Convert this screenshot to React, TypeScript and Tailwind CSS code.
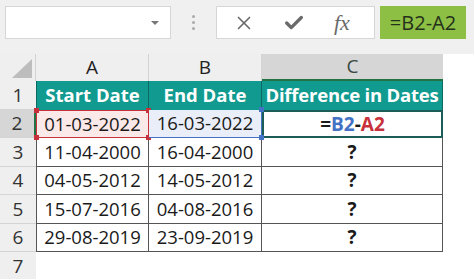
import { Check, X } from "lucide-react";

const rows = [
    ["11-04-2000", "16-04-2000"],
    ["04-05-2012", "14-05-2012"],
    ["15-07-2016", "04-08-2016"],
    ["29-08-2019", "23-09-2019"],
];

const font = { fontFamily: '"Open Sans", "Liberation Sans", sans-serif' };

const Handle = ({ pos, color }: { pos: string; color: string }) => (
    <span className={`absolute w-[5px] h-[5px] ${pos} ${color}`} />
);

const RowHead = ({ n, active }: { n: number; active?: boolean }) => (
    <div
        className={`w-[36px] shrink-0 flex items-center justify-center text-[19px] text-[#333] border-b border-[#d4d4d4] ${
            active ? "bg-[#d6d6d6] border-r-2 border-r-[#217346]" : "bg-[#efefef]"
        }`}
    >
        {n}
    </div>
);

const App = () => {
    return (
        <div className="w-[474px] h-[279px] overflow-hidden bg-white" style={font}>
            {/* formula bar */}
            <div className="h-[54px] bg-[#f0f0f0] flex items-start pt-[6px] pl-[5px]">
                <div className="w-[166px] h-[33px] bg-white border border-[#d6d6d6] flex items-center justify-end pr-[11px]">
                    <span className="w-0 h-0 border-l-[4px] border-r-[4px] border-t-[4px] border-l-transparent border-r-transparent border-t-[#777]" />
                </div>
                <div className="w-[45px] h-[33px] flex flex-col items-center justify-center gap-[3px]">
                    <span className="w-[3px] h-[3px] rounded-full bg-[#aaa]" />
                    <span className="w-[3px] h-[3px] rounded-full bg-[#aaa]" />
                    <span className="w-[3px] h-[3px] rounded-full bg-[#aaa]" />
                </div>
                <div className="w-[159px] h-[33px] bg-white border border-[#d6d6d6] flex items-center pl-[16px]">
                    <X size={22} strokeWidth={1.8} className="text-[#6a6a6a]" />
                    <Check size={22} strokeWidth={3.6} className="text-[#6a6a6a] ml-[28px]" />
                    <span
                        className="ml-[29px] text-[22px] italic text-[#6a6a6a] leading-none"
                        style={{ fontFamily: '"Liberation Serif", serif' }}
                    >
                        fx
                    </span>
                </div>
                <div className="ml-[5px] w-[86px] h-[33px] bg-[#8dbf45] flex items-center justify-center text-[20px] text-[#24301a]">
                    =B2-A2
                </div>
            </div>

            {/* column headers */}
            <div className="flex h-[27px]">
                <div className="w-[36px] shrink-0 bg-[#efefef] border-r border-[#d4d4d4] relative">
                    <span className="absolute right-[3px] bottom-[3px] w-0 h-0 border-b-[19px] border-l-[20px] border-b-[#bdbdbd] border-l-transparent" />
                </div>
                <div className="w-[113px] bg-[#efefef] border-r border-[#d4d4d4] flex items-center justify-center text-[19px] text-[#222]">A</div>
                <div className="w-[113px] bg-[#efefef] border-r border-[#d4d4d4] flex items-center justify-center text-[19px] text-[#222]">B</div>
                <div className="w-[181px] bg-[#d6d6d6] border-b-2 border-[#217346] flex items-center justify-center text-[19px] text-[#3a4a44]">C</div>
                <div className="flex-1 bg-white" />
            </div>

            {/* row 1 */}
            <div className="flex h-[28.5px]">
                <RowHead n={1} />
                <div className="w-[113px] bg-[#119a8f] border-l border-r border-[#0b6a63] flex items-center justify-center text-[18.5px] font-bold text-white">Start Date</div>
                <div className="w-[113px] bg-[#119a8f] border-r border-[#0b6a63] flex items-center justify-center text-[18.5px] font-bold text-white">End Date</div>
                <div className="w-[181px] bg-[#119a8f] border-r border-[#0b6a63] flex items-center justify-center text-[18.5px] font-bold text-white tracking-[-0.2px]">Difference in Dates</div>
            </div>

            {/* row 2 */}
            <div className="flex h-[28.5px]">
                <RowHead n={2} active />
                <div className="relative w-[113px] bg-[#fbe8e8] border border-[#c7313b] flex items-center justify-center text-[18.5px] text-[#1a1a1a]">
                    01-03-2022
                    <Handle pos="-left-[3px] -top-[3px]" color="bg-[#c7313b]" />
                    <Handle pos="-right-[3px] -top-[3px]" color="bg-[#c7313b]" />
                    <Handle pos="-left-[3px] -bottom-[3px]" color="bg-[#c7313b]" />
                    <Handle pos="-right-[3px] -bottom-[3px]" color="bg-[#c7313b]" />
                </div>
                <div className="relative w-[113px] bg-[#e9eef8] border-b border-r border-[#4472c4] flex items-center justify-center text-[18.5px] text-[#1a1a1a]">
                    16-03-2022
                    <Handle pos="-right-[3px] -top-[3px]" color="bg-[#4472c4]" />
                    <Handle pos="-right-[3px] -bottom-[3px]" color="bg-[#4472c4]" />
                </div>
                <div className="w-[181px] bg-white border-2 border-[#1c5e57] flex items-center justify-center text-[19px] font-bold text-[#1a1a1a]">
                    =<span className="text-[#4472c4]">B2</span>-<span className="text-[#c7313b]">A2</span>
                </div>
            </div>

            {/* rows 3-6 */}
            {rows.map((r, i) => (
                <div key={i} className="flex h-[28.5px]">
                    <RowHead n={i + 3} />
                    <div className="w-[113px] border-l border-r border-b border-[#555] flex items-center justify-center text-[18.5px] text-[#1a1a1a]">{r[0]}</div>
                    <div className="w-[113px] border-r border-b border-[#555] flex items-center justify-center text-[18.5px] text-[#1a1a1a]">{r[1]}</div>
                    <div className="w-[181px] border-r border-b border-[#555] flex items-center justify-center text-[19px] font-bold text-[#1a1a1a]">?</div>
                </div>
            ))}

            {/* row 7 */}
            <div className="flex h-[28.5px]">
                <RowHead n={7} />
            </div>
        </div>
    );
};

export default App;
